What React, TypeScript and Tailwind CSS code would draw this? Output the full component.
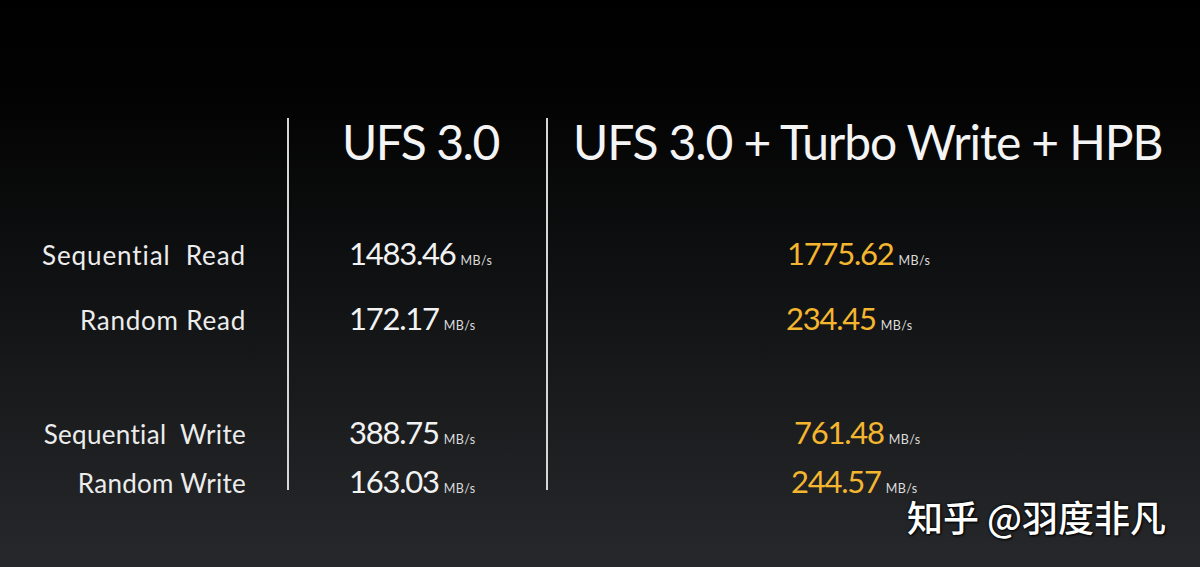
import React from "react";

const font = { fontFamily: "Lato, 'Noto Sans', sans-serif" };

function Val({ v, unit, orange }: { v: string; unit: string; orange?: boolean }) {
  return (
    <div className="flex items-baseline">
      <span
        className={`text-[31px] leading-none tracking-[-0.04em] ${orange ? "text-[#f4b62f]" : "text-[#f2f2f2]"}`}
      >
        {v}
      </span>
      <span className="ml-[5px] text-[12.5px] leading-none text-[#dcdcdc] tracking-[0.03em]">{unit}</span>
    </div>
  );
}

export default function App() {
  const rows = [
    { label: "Sequential\u00a0 Read", a: "1483.46", b: "1775.62", pl: "pl-[241px]", tr: "tracking-[0.035em]" },
    { label: "Random Read", a: "172.17", b: "234.45", pl: "pl-[240px]", tr: "tracking-[0.03em]" },
    { label: "Sequential\u00a0 Write", a: "388.75", b: "761.48", pl: "pl-[248px]", tr: "tracking-[0.012em]" },
    { label: "Random Write", a: "163.03", b: "244.57", pl: "pl-[245px]", tr: "tracking-[0.01em]" },
  ];
  return (
    <div
      className="relative h-[567px] w-[1200px] overflow-hidden bg-[linear-gradient(to_bottom,#000000_0%,#030303_18%,#0e0f10_45%,#1c1d1f_75%,#26282b_100%)]"
      style={font}
    >
      <div className="pt-[118px]">
        <div className="grid grid-cols-[287px_259px_654px] grid-rows-[120px_65px_114px_49px_24px] items-baseline">
          <div className="col-start-2 row-start-1 row-span-5 self-stretch border-l-2 border-[#d6d6d6]" />
          <div className="col-start-3 row-start-1 row-span-5 self-stretch border-l-2 border-[#d6d6d6]" />

          <div className="col-start-2 row-start-1 pl-[55px] text-[48px] leading-none text-[#f4f4f4] tracking-[-0.03em]">
            UFS 3.0
          </div>
          <div className="col-start-3 row-start-1 pl-[27px] text-[48px] leading-none text-[#f4f4f4] tracking-[-0.023em] whitespace-nowrap">
            UFS 3.0 + Turbo Write + HPB
          </div>

          {rows.map((r, i) => {
            const rs = ["row-start-2", "row-start-3", "row-start-4", "row-start-5"][i];
            return (
              <React.Fragment key={i}>
                <div className={`col-start-1 ${rs} pr-[41px] text-right text-[26px] leading-none text-[#ececec] ${r.tr} whitespace-nowrap`}>
                  {r.label}
                </div>
                <div className={`col-start-2 ${rs} pl-[62px]`}>
                  <Val v={r.a} unit="MB/s" />
                </div>
                <div className={`col-start-3 ${rs} ${r.pl}`}>
                  <Val v={r.b} unit="MB/s" orange />
                </div>
              </React.Fragment>
            );
          })}
        </div>
      </div>

      <div
        className="absolute left-[907px] top-[498px] whitespace-nowrap text-[36px] leading-none font-medium text-white [text-shadow:1px_1px_2px_#000,0_0_3px_#000]"
        style={{ fontFamily: "'Noto Sans CJK SC', 'Noto Sans', sans-serif" }}
      >
        知乎 @羽度非凡
      </div>
    </div>
  );
}
